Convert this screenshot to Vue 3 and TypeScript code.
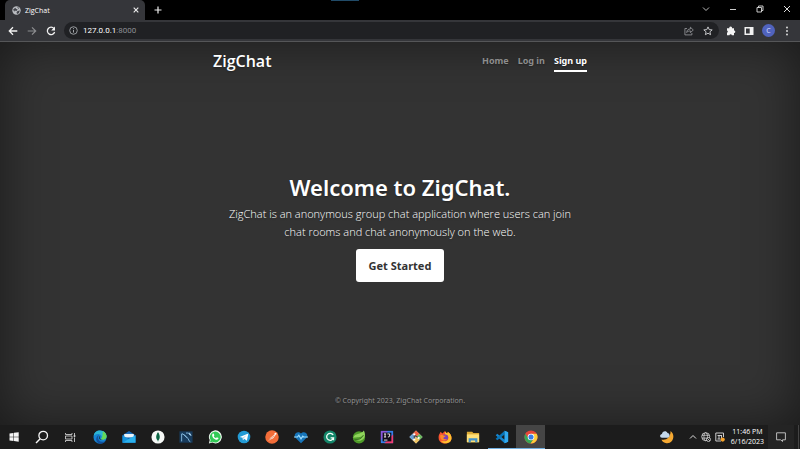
<script setup lang="ts">
import { ref } from 'vue'

interface NavItem {
  label: string
  href: string
}

const navItems: NavItem[] = [
  { label: 'Home', href: '#home' },
  { label: 'Log in', href: '#login' },
  { label: 'Sign up', href: '#signup' },
]
const active = ref('Sign up')
</script>

<template>
  <div class="desktop">
    <header class="browser">
      <div class="tabs">
        <div class="tab">
          <svg class="globe" viewBox="0 0 16 16"><circle cx="8" cy="8" r="7.5" fill="#b9bcc0" /><path d="M2 6l4-3 1 2 3 1-2 3-3-1-1 2zM10 9l4-1-2 5-3 1-1-3zM9 1l4 3-2 1z" fill="#42444a" /></svg>
          <span class="tab-title">ZigChat</span>
          <button class="plain" aria-label="Close tab"><svg width="6" height="6" viewBox="0 0 6 6"><path d="M.7.7l4.6 4.6M5.3.7L.7 5.3" stroke="#eee" stroke-width="1.1" /></svg></button>
        </div>
        <button class="plain add" aria-label="New tab"><svg width="8" height="8" viewBox="0 0 8 8"><path d="M4 .5v7M.5 4h7" stroke="#eee" stroke-width="1.2" /></svg></button>
        <div class="drag"><span class="accent"></span></div>
        <div class="window-controls">
          <button class="plain" aria-label="Search tabs"><svg width="8" height="8" viewBox="0 0 8 8"><path d="M1 2.5l3 3 3-3" fill="none" stroke="#bbb" /></svg></button>
          <button class="plain" aria-label="Minimize"><svg width="8" height="8" viewBox="0 0 8 8"><path d="M1 4.5h6" stroke="#ccc" /></svg></button>
          <button class="plain" aria-label="Restore"><svg width="8" height="8" viewBox="0 0 8 8"><path d="M1 2.5h4.500v4.500H1zM2.500 2.500V1H7v4.500H5.500" fill="none" stroke="#ddd" stroke-width=".9" /></svg></button>
          <button class="plain" aria-label="Close"><svg width="8" height="8" viewBox="0 0 8 8"><path d="M1 1l6 6M7 1L1 7" stroke="#ddd" /></svg></button>
        </div>
      </div>
      <div class="toolbar">
        <div class="history">
          <button class="plain" aria-label="Back"><svg width="10" height="10" viewBox="0 0 10 10"><path d="M9.300 5H1.500M5 1.300L1.300 5 5 8.700" fill="none" stroke="#f3f3f3" stroke-width="1.300" /></svg></button>
          <button class="plain" aria-label="Forward"><svg width="10" height="10" viewBox="0 0 10 10"><path d="M.7 5h7.800M5 1.300L8.700 5 5 8.700" fill="none" stroke="#8c8d90" stroke-width="1.200" /></svg></button>
          <button class="plain" aria-label="Reload"><svg width="10" height="10" viewBox="0 0 10 10"><path d="M8 2.600A3.700 3.700 0 1 0 8.600 6" fill="none" stroke="#f3f3f3" stroke-width="1.300" /><path d="M9 .6v3.900H5.200z" fill="#f3f3f3" /></svg></button>
        </div>
        <div class="address">
          <svg width="9" height="9" viewBox="0 0 10 10"><circle cx="5" cy="5" r="4.200" fill="none" stroke="#a5a8ac" /><path d="M5 4.300v3M5 2.400v1" stroke="#a5a8ac" stroke-width="1.100" /></svg>
          <span class="url">127.0.0.1<span class="port">:8000</span></span>
          <button class="plain" aria-label="Share"><svg width="10" height="10" viewBox="0 0 10 10"><path d="M3 2.500H.9v6.400h7V7M2.700 6.500c.2-2.500 1.500-3.500 3.700-3.500V1.200L9.300 4 6.400 6.600V4.900c-1.600 0-2.800.4-3.700 1.600z" fill="none" stroke="#9a9c9f" stroke-width=".8" /></svg></button>
          <button class="plain" aria-label="Bookmark this tab"><svg width="10" height="10" viewBox="0 0 10 10"><path d="M5 .9l1.200 2.700 3 .3-2.300 1.900.7 2.900L5 7.200 2.400 8.700l.7-2.900L.8 3.900l3-.3z" fill="none" stroke="#d2d4d6" stroke-width=".9" /></svg></button>
        </div>
        <div class="tools">
          <button class="plain" aria-label="Extensions"><svg width="10" height="10" viewBox="0 0 10 10"><path d="M1 2.300h2.300a1.400 1.400 0 1 1 2.700 0h2v2.200a1.300 1.300 0 1 1 0 2.600v2.200H5.900a1.300 1.300 0 0 0-2.500 0H1V6.800a1.300 1.300 0 0 0 0-2.400z" fill="#f4f4f4" /></svg></button>
          <button class="plain" aria-label="Side panel"><svg width="10" height="10" viewBox="0 0 10 10"><path d="M.5 1h9v8h-9zM2 2.400v5.200h3.700V2.400z" fill="#f1f1f1" fill-rule="evenodd" /></svg></button>
          <button class="plain avatar" aria-label="Profile">C</button>
          <button class="plain menu" aria-label="Browser menu"><svg width="4" height="10" viewBox="0 0 4 10"><g fill="#e8e8e8"><circle cx="2" cy="1.500" r=".9" /><circle cx="2" cy="5" r=".9" /><circle cx="2" cy="8.500" r=".9" /></g></svg></button>
        </div>
      </div>
    </header>

    <div class="page">
      <div class="cover">
        <header class="masthead">
          <h3 class="brand">ZigChat</h3>
          <nav class="nav">
            <a v-for="item in navItems" :key="item.label" :href="item.href" :class="{ active: item.label === active }" @click="active = item.label">{{ item.label }}</a>
          </nav>
        </header>
        <main class="hero">
          <h1>Welcome to ZigChat.</h1>
          <p>ZigChat is an anonymous group chat application where users can join chat rooms and chat anonymously on the web.</p>
          <a class="start" href="#start">Get Started</a>
        </main>
        <footer class="copyright">© Copyright 2023, ZigChat Corporation.</footer>
      </div>
    </div>

    <footer class="taskbar">
      <div class="system">
        <button class="plain" aria-label="Start"><svg width="10" height="10" viewBox="0 0 10 10"><path d="M.5 1.500l4-.6v3.800h-4zM5 .8L9.700.2v4.500H5zM.5 5.200h4V9l-4-.6zM5 5.200h4.700v4.500L5 9.100z" fill="#f5f5f5" /></svg></button>
        <button class="plain" aria-label="Search"><svg width="14" height="14" viewBox="0 0 14 14"><circle cx="8.200" cy="5.600" r="4.300" fill="none" stroke="#f5f5f5" stroke-width="1.300" /><path d="M5.200 8.700L1 13" stroke="#f5f5f5" stroke-width="1.400" /></svg></button>
        <button class="plain" aria-label="Task view"><svg width="11" height="11" viewBox="0 0 11 11"><path d="M.5 1v1.500h6.500V1M.5 10V8.500h6.500V10M.5 4h6.500v3H.5zM9.500 1v2M9.500 5.500V10" fill="none" stroke="#ccc" stroke-width=".9" /><circle cx="9.500" cy="4" r="1" fill="#ddd" /></svg></button>
      </div>
      <div class="apps">
        <button class="plain" aria-label="Microsoft Edge"><svg viewBox="0 0 16 16"><circle cx="8" cy="8" r="7.500" fill="#1684d1" /><path d="M.8 7C1.200 2.800 4 .5 8 .5c4.800 0 7.500 3.500 7.500 6.500 0 3-2.500 4-4.700 4-1.600 0-2-.7-1.200-1.500C11 7 8.500 4.500 5.500 4.500 3 4.500 1.500 5.600.8 7z" fill="#2db5d3" /><path d="M11 1.300c3 1.300 4.500 3.700 4.500 5.700 0 3-2.500 4-4.700 4-1.600 0-2-.7-1.200-1.500C11 7.500 11.500 4 11 1.300z" fill="#65d957" /><path d="M7 5.800C4.700 8 5.500 13 11 13.500c1.500 0 2.800-.5 3.500-1-2 3-6 3.800-8.500 2.500C2.500 13 3 7 7 5.800z" fill="#11519f" /><path d="M8.300 6.800C6.800 8.500 8 11 11 11.200c-1 .5-3.500.2-4-1.700-.4-1.500.3-2.400 1.300-2.700z" fill="#202020" /></svg></button>
        <button class="plain" aria-label="Mail"><svg viewBox="0 0 16 16"><path d="M.5 6L8 1l7.500 5v8.500H.5z" fill="#1264b5" /><path d="M2.500 4.500h11v4h-11z" fill="#eaf4fa" /><path d="M.5 6L8 10.500.5 14.500z" fill="#1593dc" /><path d="M15.500 6v8.500H.5L8 10z" fill="#2ab1ed" /></svg></button>
        <button class="plain" aria-label="MongoDB Compass"><svg viewBox="0 0 16 16"><circle cx="8" cy="8" r="7.500" fill="#f7f9f7" /><path d="M8 2.500c3 3.800 2.500 7.500.3 9.500L8 14l-.3-2C5.500 10 5 6.300 8 2.500z" fill="#11724d" /><path d="M8 3v9" stroke="#033e2b" stroke-width=".6" /></svg></button>
        <button class="plain" aria-label="MySQL Workbench"><svg viewBox="0 0 16 16"><path d="M.5 1.500h15v13H.5z" fill="#183b5c" /><path d="M3 13V4.500C6 5 9 7 11.500 12M4 4l5 5M8 3.500c3-.5 5 1 5.500 3M11 12l2 1.500" stroke="#83b5d9" stroke-width="1.100" fill="none" /><path d="M12 2.500l2.500 4-3-1z" fill="#b4d8f0" /></svg></button>
        <button class="plain" aria-label="WhatsApp"><svg viewBox="0 0 16 16"><path d="M1 15.500l1-4A7.400 7.400 0 1 1 5 14.400z" fill="#f1faf3" /><path d="M2.200 14.300l.8-3A6.200 6.200 0 1 1 5.300 13.500z" fill="#31c955" /><path d="M5.200 4.200l1.300-.2.800 2-.7 1c.6 1.100 1.300 1.700 2.500 2.300l1-1 1.900.9c-.2 1.700-1.500 2.200-3 1.800C6.500 10.300 3.700 7 5.200 4.200z" fill="#fff" /></svg></button>
        <button class="plain" aria-label="Telegram"><svg viewBox="0 0 16 16"><circle cx="8" cy="8" r="7.200" fill="#239bd5" /><path d="M3 8l10-4-1.700 8.300-3-2.200-1.500 1.500-.4-2.800z" fill="#fff" /><path d="M6.500 8.800L11 6l-3.700 3.700-.5 1.900z" fill="#a9cde2" /></svg></button>
        <button class="plain" aria-label="Postman"><svg viewBox="0 0 16 16"><circle cx="8" cy="8" r="7.700" fill="#f36d39" /><path d="M3.500 12.500l3-4 5-4 .8.800-3 4-4 2z" fill="#fff5ee" /><path d="M4 12l6.500-5.500" stroke="#e1693a" stroke-width=".8" /><circle cx="12" cy="4.200" r="1.200" fill="#fff" /></svg></button>
        <button class="plain" aria-label="Azure Data Studio"><svg viewBox="0 0 16 16"><path d="M8 15L1.300 8.500C-1 3.500 5 .6 8 4c3-3.400 9-.5 6.700 4.500z" fill="#1674b9" /><path d="M0 8h4l1.500-2L8 10l2-3 1 1h5" fill="none" stroke="#9cddff" stroke-width="1.400" /></svg></button>
        <button class="plain" aria-label="Grammarly"><svg viewBox="0 0 16 16"><circle cx="8" cy="8" r="7.500" fill="#14866a" /><path d="M11.600 5.700A4 4 0 1 0 12 9H8.700m3.300 0v2.700" fill="none" stroke="#f3fff9" stroke-width="1.500" /></svg></button>
        <button class="plain" aria-label="Spring Tools"><svg viewBox="0 0 16 16"><circle cx="8" cy="8.500" r="7" fill="#4f9c29" /><path d="M1.500 9C3 3 10 6 13.500.7 16 5 15 11 10 12c-3.500.7-6-.5-7-1.500C8 11 11 9 12.500 6 9.500 9 6 8 1.500 9z" fill="#90d45c" /><path d="M3 11c4 .5 8-1 10-5" stroke="#265a16" fill="none" /></svg></button>
        <button class="plain" aria-label="IntelliJ IDEA"><svg viewBox="0 0 16 16"><path d="M1 1h14v14H1z" fill="#347fe8" /><path d="M1 1h8L1 12z" fill="#8b56db" /><path d="M15 5v10H5z" fill="#ed3e75" /><path d="M3 3h10v10H3z" fill="#100b17" /><path d="M4.500 4.500h2.500m-1.200 0v3.500M4.500 8H7M8.500 4.500h2.500V7q0 1-2 1M4.500 11.500h4" stroke="#fff" fill="none" /></svg></button>
        <button class="plain" aria-label="Git Bash"><svg viewBox="0 0 16 16"><path d="M8 .5L15.500 8 8 15.500.5 8z" fill="#d7d5df" /><path d="M8 .5L12 4.500 8 8 4.200 4.300z" fill="#ef6040" /><path d="M12 4.500L15.500 8 12 11.500 8 8z" fill="#69b85b" /><path d="M4.200 4.300L8 8l-4 3.500L.5 8z" fill="#69a1d5" /><path d="M4 11.500L8 8l4 3.500-4 4z" fill="#f0c45f" /><path d="M6 4v8M6 6l5 3" stroke="#403d48" stroke-width="1.200" /><circle cx="6" cy="5" r="1.300" fill="#fff" /><circle cx="6" cy="11" r="1.300" fill="#fff" /><circle cx="11" cy="9" r="1.300" fill="#fff" /></svg></button>
        <button class="plain" aria-label="Firefox"><svg viewBox="0 0 16 16"><path d="M2 4l1-2 2 2 3-3c.5 2 2 2 3 3V2c5 3 6 9 2 12-4 3-10 1.500-12-3C.3 8 .8 5.500 2 4z" fill="#fa542e" /><path d="M11 2c5 3 6 9 2 12-4 2.500-8 1-10-2 4 2 9 1 9-3.500C12 6 10 5 8 5V1c.5 2 2 2 3 3z" fill="#ffc12e" /><circle cx="8" cy="8.500" r="3.500" fill="#7942ba" /><path d="M2.500 6C5 4 6 7 9 6.500 8 8 6.500 8 6 9.500c1 1.500 3 1.500 4.500.5C9 13.500 2 13 2.500 6z" fill="#ff8b29" /></svg></button>
        <button class="plain" aria-label="File Explorer"><svg viewBox="0 0 16 16"><path d="M1 2h6l1.500 1.500H15V14H1z" fill="#dcaa35" /><path d="M1 5h14v9H1z" fill="#ffe078" /><path d="M3 9.500h10V14h-2.500v-2h-5v2H3z" fill="#4291ca" /></svg></button>
        <button class="plain running" aria-label="Visual Studio Code"><svg viewBox="0 0 16 16"><path d="M11 .8l4 1.900v10.600l-4 1.900L.8 5.900l1.800-1.500L11 11z" fill="#1686cf" /><path d="M11 .8v4.400L2.600 11.600.8 10z" fill="#0874b8" /><path d="M11 .8l4 1.900v10.600l-4 1.900z" fill="#31a9ef" /></svg></button>
        <button class="plain running current" aria-label="Google Chrome"><svg viewBox="0 0 16 16"><circle cx="8" cy="8" r="7.500" fill="#e74639" /><path d="M1.500 4.200A7.500 7.500 0 0 0 7.500 15.500L11.300 10 8 8H3.800z" fill="#36a656" /><path d="M14.500 4.400A7.500 7.500 0 0 1 7.500 15.500l3.700-5.600L8 4.400z" fill="#fdce3a" /><circle cx="8" cy="8" r="3.800" fill="#fff" /><circle cx="8" cy="8" r="2.900" fill="#397ee7" /></svg></button>
      </div>
      <div class="tray">
        <button class="plain weather" aria-label="Weather"><svg width="14" height="14" viewBox="0 0 14 14"><path d="M10.500 1C16 5 13 14 6.500 13.300 4 13 2 11.500 1.500 9.500 6 11 11 7 10.500 1z" fill="#f4a832" /><path d="M2 7.800C-1 7.500 0 4 2 4c0-3 4.500-4 5.500-1C10 3 10.500 7.500 7.500 7.800z" fill="#c3d8ec" /></svg></button>
        <button class="plain" aria-label="Show hidden icons"><svg width="8" height="8" viewBox="0 0 8 8"><path d="M1 5.500l3-3 3 3" fill="none" stroke="#ddd" /></svg></button>
        <button class="plain" aria-label="Network"><svg width="10" height="10" viewBox="0 0 10 10"><circle cx="4.700" cy="4.700" r="4" fill="none" stroke="#ddd" stroke-width=".8" /><ellipse cx="4.700" cy="4.700" rx="1.800" ry="4" fill="none" stroke="#ddd" stroke-width=".7" /><path d="M1 3.300h7.500M1 6.100h5" stroke="#ddd" stroke-width=".7" /><circle cx="7.500" cy="7.500" r="2" fill="#1c1c1c" stroke="#ddd" stroke-width=".8" /><path d="M6.300 6.300l2.500 2.500" stroke="#ddd" stroke-width=".8" /></svg></button>
        <button class="plain" aria-label="Input status"><svg width="10" height="10" viewBox="0 0 10 10"><path d="M8.500 5V1H.8v8H6M2.500 3.500h4M4 3.500v3.300M2.500 7h3M6.500 3v3" fill="none" stroke="#ddd" stroke-width=".9" /><circle cx="7.700" cy="7.600" r="2.100" fill="#f7a32b" /></svg></button>
        <div class="clock"><time>11:46 PM</time><time datetime="2023-06-16">6/16/2023</time></div>
        <button class="plain notice" aria-label="Notifications"><svg width="10" height="10" viewBox="0 0 10 10"><path d="M.6.8h8.800v7H6.500V9.500L4.700 7.800H.6z" fill="none" stroke="#ccc" stroke-width=".9" /></svg></button>
        <span class="peek"></span>
      </div>
    </footer>
  </div>
</template>

<style>
body { background: #333; }
</style>

<style scoped>
* { box-sizing: border-box; }
.desktop { display: flex; flex-direction: column; min-height: 100vh; font-family: "Noto Sans", "Open Sans", sans-serif; color: #fff; }
.plain { display: flex; align-items: center; justify-content: center; padding: 0; border: 0; background: none; color: inherit; font: inherit; }
svg { display: block; flex: none; }
.browser { background: #35363a; border-bottom: 1px solid #555658; }
.tabs { display: flex; height: 20px; padding-left: 5px; background: #000; }
.tab { display: flex; align-items: center; width: 140px; padding: 0 6px 0 7px; background: #35363a; border-radius: 5px 5px 0 0; }
.globe { width: 9px; height: 9px; }
.tab-title { flex: 1; margin-left: 4px; font-family: "Open Sans", sans-serif; font-size: 7px; }
.add { width: 26px; }
.drag { flex: 1; display: flex; justify-content: center; padding-right: 174px; }
.accent { width: 28px; height: 1px; background: #214b68; }
.window-controls { display: flex; }
.window-controls button { width: 27px; padding-bottom: 3px; }
.toolbar { display: flex; align-items: center; height: 21px; }
.history { display: flex; gap: 9px; padding: 0 8px; }
.address { display: flex; flex: 1; align-items: center; height: 17px; padding: 0 6px 0 5px; gap: 9px; border-radius: 9px; background: #202124; }
.url { flex: 1; margin-left: -4px; font-family: Roboto, sans-serif; font-size: 8px; }
.port { color: #8d9095; }
.tools { display: flex; align-items: center; gap: 8px; padding: 0 11px 0 7px; }
.avatar { width: 13px; height: 13px; border-radius: 50%; background: #5063bd; color: #d6dcff; font-size: 7px; }
.menu { margin-left: 2px; }
.page { display: flex; flex: 1; justify-content: center; background: #333; box-shadow: inset 0 0 50px rgba(0, 0, 0, .5); text-align: center; text-shadow: 0 1px 2px rgba(0, 0, 0, .3); }
.cover { display: flex; flex-direction: column; width: 100%; max-width: 374px; padding: 8px 0 16px; }
.masthead { display: flex; align-items: flex-start; justify-content: space-between; }
.brand { margin: 0; font-family: "Open Sans", sans-serif; font-size: 16px; line-height: 22px; font-weight: 600; }
.nav { display: flex; gap: 9px; padding-top: 1px; font-size: 9px; line-height: 19px; font-weight: 700; }
.nav a { color: #8d8d8d; text-decoration: none; border-bottom: 2px solid transparent; }
.nav a.active { color: #fff; border-color: #fff; }
.hero { margin: auto 0; padding: 0 12px 10px; }
h1 { margin: 0 0 4px; font-size: 22px; line-height: 28px; font-weight: 600; }
p { margin: 0 0 8px; font-family: "Open Sans", sans-serif; font-size: 11px; line-height: 18px; font-weight: 300; }
.start { display: inline-block; padding: 8px 13px; border-radius: 3px; background: #fff; color: #333; font-size: 11px; line-height: 17px; font-weight: 700; text-decoration: none; text-shadow: none; }
.copyright { color: #929292; font-size: 7px; line-height: 16px; }
.taskbar { display: flex; height: 24px; background: #1c1c1c; }
.system { display: flex; margin-right: 2px; }
.system button { width: 28px; }
.apps { display: grid; flex: 0 1 459px; grid-template-columns: repeat(16, 1fr); }
.apps svg { width: 14px; height: 14px; }
.running { border-bottom: 1px solid #71afe0; }
.current { background: #454545; }
.tray { display: flex; align-items: center; gap: 4px; margin-left: auto; }
.weather { margin-right: 11px; }
.clock { display: flex; flex-direction: column; align-items: center; margin-left: 2px; font-family: "Open Sans", sans-serif; font-size: 7px; line-height: 10px; }
.notice { width: 26px; height: 24px; background: #242424; }
.peek { width: 1px; height: 24px; margin-right: 1px; background: #444; }
</style>
